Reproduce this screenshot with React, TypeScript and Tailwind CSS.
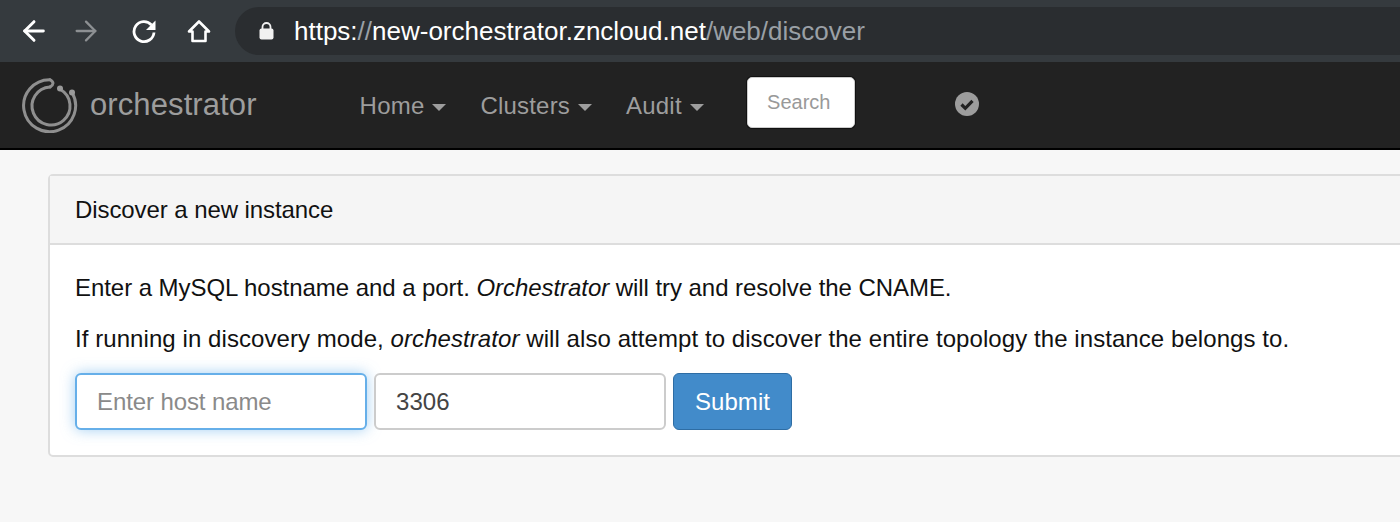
import { ArrowLeft, ArrowRight } from 'lucide-react';

function NavItem({ label }: { label: string }) {
  return (
    <a className="flex items-center gap-[8px] text-[24px] tracking-[0.2px] text-[#9d9d9d]">
      {label}
      <span className="mt-[2px] border-x-[7px] border-t-[7px] border-x-transparent border-t-[#9d9d9d]" />
    </a>
  );
}

function Logo() {
  return (
    <svg width="56" height="56" viewBox="0 0 56 56" fill="none" className="shrink-0">
      <g stroke="#8f8f8f" strokeWidth="3" strokeLinecap="round">
        <path d="M28 2.700A26 26 0 1 0 50 15.500" />
        <path d="M28 10A19 19 0 1 0 38.500 12.500" />
        <path d="M28 2.700Q34 6 28 10" />
      </g>
      <circle cx="38" cy="11.500" r="3" fill="#9a9a9a" />
      <circle cx="50" cy="15.500" r="3" fill="#9a9a9a" />
    </svg>
  );
}

function ReloadIcon() {
  return (
    <svg width="26" height="26" viewBox="0 0 26 26" fill="none" className="ml-[29px] shrink-0">
      <path d="M20.500 7A10 10 0 1 0 23 14.500" stroke="white" strokeWidth="2.800" />
      <path d="M24.500 2.500v9.500h-9.500z" fill="white" />
    </svg>
  );
}

function HomeIcon() {
  return (
    <svg width="24" height="24" viewBox="0 0 24 24" fill="none" className="ml-[30px] shrink-0">
      <path d="M12 2.500 22 12.500h-3.500V22H5.500V12.500H2Z" stroke="white" strokeWidth="2.600" strokeLinejoin="round" />
    </svg>
  );
}

function LockIcon() {
  return (
    <svg width="15" height="18" viewBox="0 0 15 18" fill="none" className="shrink-0">
      <path d="M3.500 7V5a4 4 0 0 1 8 0v2" stroke="#f1f1f1" strokeWidth="1.800" />
      <rect x="0.500" y="6.500" width="14" height="11" rx="2" fill="#f1f1f1" />
    </svg>
  );
}

export default function App() {
  return (
    <div className="h-[522px] w-[1400px] overflow-hidden bg-[#f7f7f7] font-['Liberation_Sans',Arial,sans-serif]">
      <div className="flex h-[62px] items-center bg-[#353a3e] pl-[18px]">
        <ArrowLeft size={32} strokeWidth={2.2} className="shrink-0 text-white" />
        <ArrowRight size={32} strokeWidth={1.7} className="ml-[20px] shrink-0 text-[#8d9093]" />
        <ReloadIcon />
        <HomeIcon />
        <div className="ml-[24px] flex h-[48px] flex-1 items-center rounded-l-[24px] bg-[#2a2d30] pl-[24px]">
          <LockIcon />
          <span className="ml-[20px] whitespace-nowrap text-[26px] text-white">
            https:<span className="text-[#9aa0a6]">//</span>new-orchestrator.zncloud.net
            <span className="text-[#9aa0a6]">/web/discover</span>
          </span>
        </div>
      </div>

      <nav className="flex h-[88px] items-center border-b-2 border-black bg-[#222222] pl-[22px]">
        <Logo />
        <span className="ml-[12px] text-[31px] tracking-[0.1px] text-[#9d9d9d]">orchestrator</span>
        <div className="ml-[103px] flex items-center gap-[34px] pt-[2px]">
          <NavItem label="Home" />
          <NavItem label="Clusters" />
          <NavItem label="Audit" />
        </div>
        <div className="mb-[5px] ml-[43px] flex h-[51px] w-[108px] items-center justify-center rounded-[5px] border border-[#cccccc] bg-white pb-[2px] pr-[4px] text-[20px] text-[#999999] shadow-[0_0_0_1px_#111111]">
          Search
        </div>
        <svg width="24" height="24" viewBox="0 0 24 24" className="ml-[100px] mt-[-2px]">
          <circle cx="12" cy="12" r="12" fill="#9d9d9d" />
          <path d="M6.500 12.500l3.800 3.800 7.200-7.500" stroke="#222222" strokeWidth="3.200" fill="none" />
        </svg>
      </nav>

      <div className="pl-[48px] pt-[24px]">
        <section className="h-[283px] w-[1400px] rounded-[5px] border-2 border-[#dddddd] bg-white">
          <div className="flex h-[69px] items-center border-b-2 border-[#dddddd] bg-[#f5f5f5] pl-[25px] text-[24px] tracking-[-0.08px] text-[#111111]">
            Discover a new instance
          </div>
          <div className="pl-[25px] pt-[26px] text-[24px] leading-[33px] tracking-[0.07px] text-[#111111]">
            <p className="tracking-[-0.055px]">
              Enter a MySQL hostname and a port. <em>Orchestrator</em> will try and resolve the CNAME.
            </p>
            <p className="mt-[18px]">
              If running in discovery mode, <em>orchestrator</em> will also attempt to discover the entire topology the
              instance belongs to.
            </p>
            <div className="mt-[18px] flex gap-[7px]">
              <input
                placeholder="Enter host name"
                className="h-[57px] w-[292px] rounded-[6px] border-2 border-[#66afe9] bg-white px-[20px] text-[24px] tracking-[-0.1px] shadow-[0_0_14px_rgba(102,175,233,0.6)] outline-none placeholder:text-[#8a8a8a]"
              />
              <input
                defaultValue="3306"
                className="h-[57px] w-[292px] rounded-[6px] border-2 border-[#cccccc] bg-white px-[20px] text-[24px] text-[#444444] outline-none"
              />
              <button className="h-[57px] w-[119px] rounded-[6px] border border-[#2e6da4] bg-[#428bca] text-[24px] text-white">
                Submit
              </button>
            </div>
          </div>
        </section>
      </div>
    </div>
  );
}
